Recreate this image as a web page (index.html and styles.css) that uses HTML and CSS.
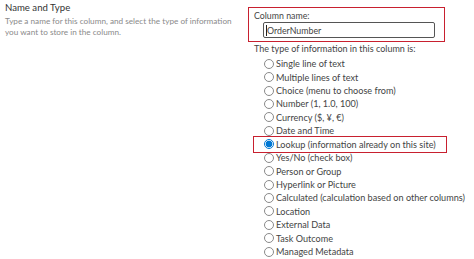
FILE: index.html
```html
<!DOCTYPE html>
<html>
<head>
<meta charset="utf-8">
<link rel="stylesheet" href="styles.css">
</head>
<body>
<div class="page">
  <div class="left">
    <div class="title">Name and Type</div>
    <div class="desc">Type a name for this column, and select the type of information you want to store in the column.</div>
  </div>
  <div class="right">
    <div class="namebox">
      <div class="label">Column name:</div>
      <div class="input"><span class="caret"></span>OrderNumber</div>
    </div>
    <div class="typelabel">The type of information in this column is:</div>
    <ul class="radios">
      <li><span class="radio"></span>Single line of text</li>
      <li><span class="radio"></span>Multiple lines of text</li>
      <li><span class="radio"></span>Choice (menu to choose from)</li>
      <li><span class="radio"></span>Number (1, 1.0, 100)</li>
      <li><span class="radio"></span>Currency ($, ¥, €)</li>
      <li><span class="radio"></span>Date and Time</li>
      <li class="selected"><span class="radio on"></span>Lookup (information already on this site)</li>
      <li><span class="radio"></span>Yes/No (check box)</li>
      <li><span class="radio"></span>Person or Group</li>
      <li><span class="radio"></span>Hyperlink or Picture</li>
      <li><span class="radio"></span>Calculated (calculation based on other columns)</li>
      <li><span class="radio"></span>Location</li>
      <li><span class="radio"></span>External Data</li>
      <li><span class="radio"></span>Task Outcome</li>
      <li><span class="radio"></span>Managed Metadata</li>
    </ul>
  </div>
</div>
</body>
</html>
```
FILE: styles.css
```css
* { box-sizing: border-box; }
html, body { margin: 0; padding: 0; background: #fff; }
body {
  font-family: Lato, "Open Sans", sans-serif;
  color: #444;
  width: 474px;
  height: 259px;
  overflow: hidden;
}
.page {
  display: flex;
  padding-left: 5px;
}
.left {
  width: 243px;
  flex: none;
}
.title {
  font-size: 9.6px;
  line-height: 14px;
  color: #333;
  margin-top: 1px;
}
.desc {
  margin-top: 1px;
  font-size: 8.2px;
  line-height: 11px;
  color: #8a8a8a;
  width: 235px;
}
.right {
  flex: none;
  width: 226px;
}
.namebox {
  margin-top: 7px;
  width: 197px;
  border: 1.5px solid #c8202f;
  padding: 1px 9px 3px 5px;
}
.label {
  font-size: 8.8px;
  line-height: 13px;
  color: #444;
}
.input {
  margin-left: 9px;
  height: 16px;
  border: 1.5px solid #555;
  border-radius: 2px;
  font-size: 8.8px;
  line-height: 13px;
  padding-left: 2px;
  color: #444;
  display: flex;
  align-items: center;
}
.caret {
  width: 1px;
  height: 11px;
  background: #222;
}
.typelabel {
  padding-left: 6px;
  font-size: 9px;
  line-height: 14px;
  color: #444;
}
.radios {
  list-style: none;
  margin: 1px 0 0 0;
  padding: 0;
}
.radios li {
  height: 13.43px;
  display: flex;
  align-items: center;
  padding-left: 16px;
  font-size: 9.1px;
  white-space: nowrap;
  color: #444;
}
.radios li.selected {
  margin-left: 7px;
  padding-left: 9px;
  width: 190px;
  outline: 1.5px solid #c8202f;
  outline-offset: 1px;
}
.radio {
  width: 10px;
  height: 10px;
  border: 1px solid #8a8a8a;
  border-radius: 50%;
  margin-right: 2px;
  flex: none;
  background: #fff;
}
.radio.on {
  border-color: #0078d4;
  background: radial-gradient(circle, #0078d4 0 3.3px, #fff 3.6px);
}
```
